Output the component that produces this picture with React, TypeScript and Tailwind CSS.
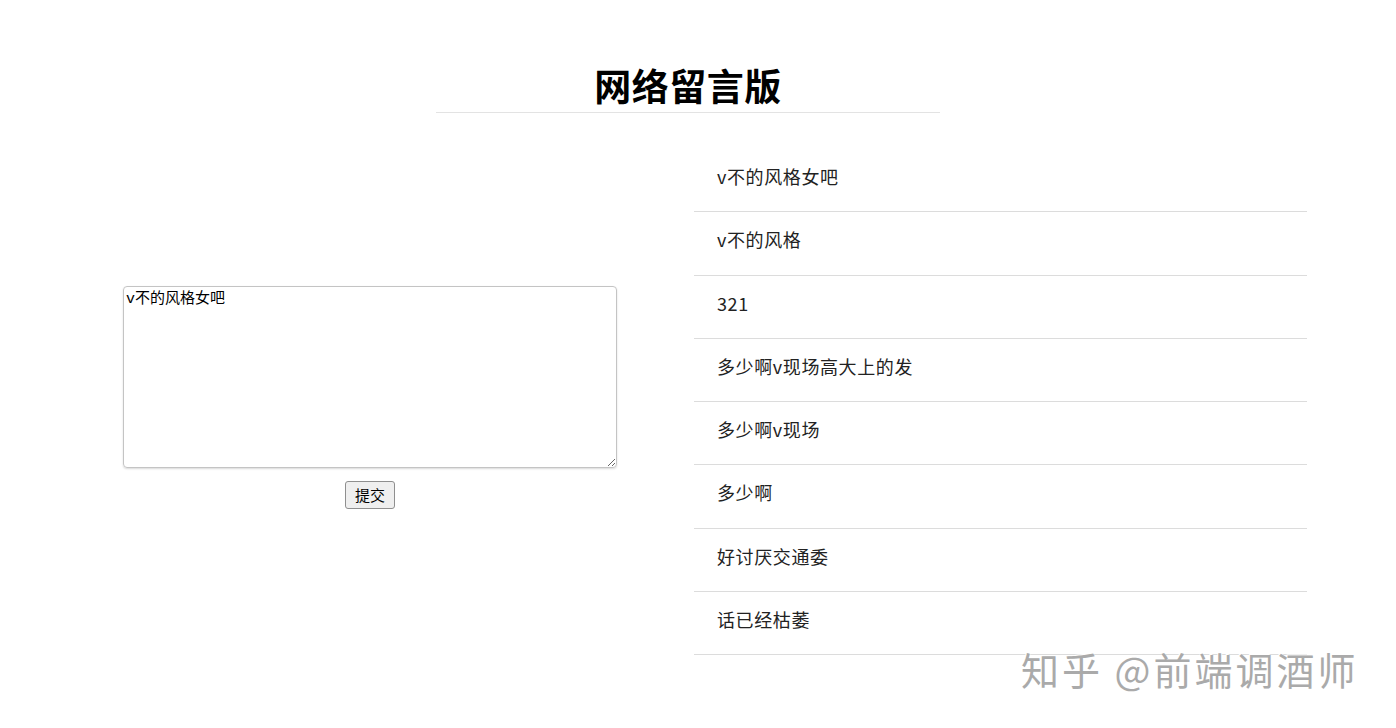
import { useState } from "react";

const cjk = "font-['Noto_Sans_CJK_SC',sans-serif]";

export default function App() {
  const [text, setText] = useState("v不的风格女吧");
  const [messages] = useState<string[]>([
    "v不的风格女吧",
    "v不的风格",
    "321",
    "多少啊v现场高大上的发",
    "多少啊v现场",
    "多少啊",
    "好讨厌交通委",
    "话已经枯萎",
  ]);

  return (
    <div className={`relative h-[728px] w-[1396px] overflow-hidden bg-white text-black ${cjk}`}>
      {/* 标题 */}
      <div className="ml-[436px] w-[504px] pt-[67px]">
        <h1 className="border-b border-[#e3e3e3] pb-[9px] text-center text-[37px] leading-[36px] font-bold tracking-[0.5px]">
          网络留言版
        </h1>
      </div>

      <div className="mt-[36px] flex">
        {/* 输入区 */}
        <div className="flex w-[694px] items-center pb-[10px] pl-[46px]">
          <div className="flex w-[648px] flex-col items-center">
            <textarea
              value={text}
              onChange={(e) => setText(e.target.value)}
              className="h-[182px] w-[494px] rounded-[4px] border border-[#c4c4c4] px-[2px] pt-[4px] pb-[2px] font-['Liberation_Mono','Noto_Sans_CJK_SC',monospace] text-[15px] leading-[18px] shadow-[0_1px_2px_rgba(0,0,0,0.15)] outline-none"
            />
            <button
              type="button"
              className="mt-[13px] h-[28px] w-[50px] rounded-[3px] border border-[#8f8f8f] bg-[#efefef] text-[15px] leading-none"
            >
              提交
            </button>
          </div>
        </div>

        {/* 留言列表 */}
        <ul className="w-[613px]">
          {messages.map((m, i) => (
            <li
              key={i}
              className="border-b border-[#dcdcdc] pt-[14px] pb-[21px] pl-[23px] text-[18px] leading-[27.3px] tracking-[0.6px] text-[#222]"
            >
              {m}
            </li>
          ))}
        </ul>
      </div>

      {/* 水印 */}
      <div className="absolute top-[650px] left-[1021px] text-[38px] leading-[38px] tracking-[3px] whitespace-nowrap text-[#aaaaaa] [text-shadow:1px_1px_0_#fff,-1px_-1px_0_#fff]">
        知乎 @前端调酒师
      </div>
    </div>
  );
}
